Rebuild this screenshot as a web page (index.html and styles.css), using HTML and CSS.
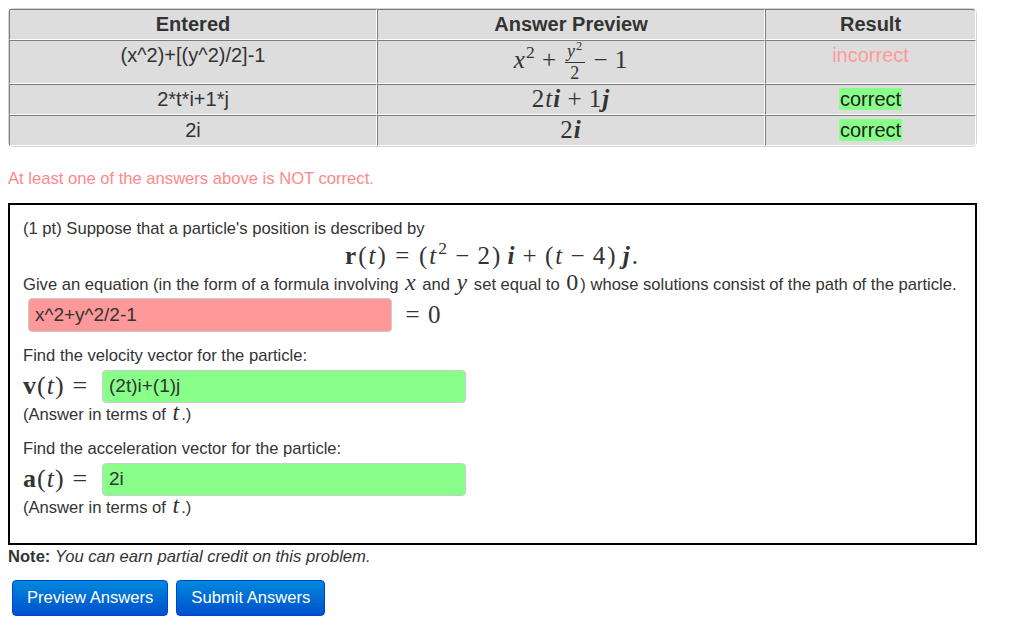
FILE: index.html
```html
<!DOCTYPE html>
<html lang="en">
<head>
    <meta charset="UTF-8">
    <title>Problem 3</title>
    <link rel="stylesheet" href="styles.css">
</head>
<body>
    <table class="attempt-results">
        <tr>
            <th class="col-entered">Entered</th>
            <th class="col-preview">Answer Preview</th>
            <th class="col-result">Result</th>
        </tr>
        <tr class="tall">
            <td>(x^2)+[(y^2)/2]-1</td>
            <td class="preview">
                <span class="math"><span class="mi">x</span><sup>2</sup><span class="op">+</span><span class="frac"><span class="num"><span class="mi">y</span><sup>2</sup></span><span class="den">2</span></span><span class="op">−</span>1</span>
            </td>
            <td><span class="incorrect">incorrect</span></td>
        </tr>
        <tr>
            <td>2*t*i+1*j</td>
            <td class="preview">
                <span class="math">2<span class="mi">t</span><span class="mbi">i</span><span class="op">+</span>1<span class="mbi">j</span></span>
            </td>
            <td><span class="correct">correct</span></td>
        </tr>
        <tr>
            <td>2i</td>
            <td class="preview">
                <span class="math">2<span class="mbi">i</span></span>
            </td>
            <td><span class="correct">correct</span></td>
        </tr>
    </table>

    <p class="message">At least one of the answers above is NOT correct.</p>

    <div class="problem">
        <p class="line">(1 pt) Suppose that a particle's position is described by</p>
        <div class="display math">
            <span class="mb">r</span>(<span class="mi">t</span>)<span class="rel">=</span>(<span class="mi">t</span><sup>2</sup><span class="op">−</span>2)<span class="sp"></span><span class="mbi">i</span><span class="op">+</span>(<span class="mi">t</span><span class="op">−</span>4)<span class="sp"></span><span class="mbi">j</span>.
        </div>
        <p class="line">Give an equation (in the form of a formula involving <span class="imath mi">x</span> and <span class="imath mi">y</span> set equal to <span class="imath">0</span>) whose solutions consist of the path of the particle.</p>
        <div class="answer-row first">
            <input class="answer wrong" type="text" value="x^2+y^2/2-1">
            <span class="math eq"><span class="rel">=</span>0</span>
        </div>

        <p class="line gap">Find the velocity vector for the particle:</p>
        <div class="answer-row">
            <span class="math label"><span class="mb">v</span>(<span class="mi">t</span>)<span class="rel">=</span></span>
            <input class="answer right" type="text" value="(2t)i+(1)j">
        </div>
        <p class="line">(Answer in terms of <span class="imath mi">t</span>.)</p>

        <p class="line gap wide">Find the acceleration vector for the particle:</p>
        <div class="answer-row">
            <span class="math label"><span class="mb">a</span>(<span class="mi">t</span>)<span class="rel">=</span></span>
            <input class="answer right" type="text" value="2i">
        </div>
        <p class="line">(Answer in terms of <span class="imath mi">t</span>.)</p>
    </div>

    <p class="note"><b>Note:</b> <i>You can earn partial credit on this problem.</i></p>

    <div class="buttons">
        <button class="btn">Preview Answers</button>
        <button class="btn">Submit Answers</button>
    </div>
</body>
</html>
```

FILE: styles.css
```css
body {
    margin: 8px;
    font-family: 'Liberation Sans', Arial, sans-serif;
    font-size: 16.6px;
    color: #333;
    background: #fff;
}

/* results table */
.attempt-results {
    border-collapse: separate;
    border-spacing: 0;
    width: 969px;
    border: 1px solid #d4d4d4;
    border-radius: 5px;
    background: #ddd;
    font-size: 20px;
    color: #333;
}

.attempt-results th,
.attempt-results td {
    border: 1px solid;
    border-color: #7d7d7d #fff #fff #7d7d7d;
    padding: 2px 4px 3px;
    line-height: 24px;
    text-align: center;
    vertical-align: top;
}

.attempt-results tr:first-child th:last-child {
    border-top-right-radius: 4px;
}

.attempt-results tr:last-child td:last-child {
    border-bottom-right-radius: 4px;
}

.col-entered { width: 358px; }
.col-preview { width: 378px; }

.attempt-results td.preview {
    vertical-align: middle;
    padding: 0 4px;
}

.tall td {
    height: 37px;
}

.incorrect {
    color: #f99;
}

.correct {
    background: #8f8;
    color: #222;
    padding: 0 1px;
}

/* math */
.math {
    font-family: 'Liberation Serif', 'Times New Roman', serif;
    font-size: 25px;
    letter-spacing: 0.04em;
    color: #333;
    white-space: nowrap;
}

.mi { font-style: italic; }
.mb { font-weight: bold; }
.mbi { font-weight: bold; font-style: italic; }

.math sup {
    font-size: 0.7em;
    line-height: 0;
    vertical-align: 0.55em;
}

.op { margin: 0 0.25em; }
.rel { margin: 0 0.3em; }
.sp { display: inline-block; width: 0.2em; }

.frac {
    display: inline-flex;
    flex-direction: column;
    align-items: center;
    vertical-align: middle;
    font-size: 0.72em;
    line-height: 1.05;
    margin: 0 0.1em;
}

.frac .num {
    border-bottom: 1px solid #333;
    padding: 0 2px 1px;
}

.frac .den {
    padding-top: 1px;
}

/* message */
.message {
    margin: 22px 0 14px;
    line-height: 20px;
    color: #f88;
}

/* problem box */
.problem {
    width: 939px;
    border: 2px solid #000;
    padding: 14px 13px 25px;
    display: flex;
    flex-direction: column;
}

.line {
    margin: 0;
    line-height: 20px;
}

.line.gap {
    margin-top: 12px;
}

.line.gap.wide {
    margin-top: 14px;
}

.imath {
    font-family: 'Liberation Serif', 'Times New Roman', serif;
    font-size: 24px;
    line-height: 0;
    margin: 0 2px;
}

.display {
    text-align: center;
    line-height: 26px;
    letter-spacing: 0.08em;
    margin: 4px 0 6px;
}

.answer-row {
    display: flex;
    align-items: center;
    height: 34px;
    margin: 3px 0 2px;
}

.answer-row.first {
    padding-left: 5px;
}

.answer-row .label {
    font-size: 26px;
    line-height: 30px;
    width: 79px;
}

.answer-row .label .rel {
    margin-right: 0;
}

.answer-row .eq {
    margin-left: 6px;
}

.answer {
    font-family: 'Liberation Sans', Arial, sans-serif;
    font-size: 19px;
    color: #333;
    height: 34px;
    box-sizing: border-box;
    width: 364px;
    padding: 2px 6px;
    border: 1px solid #ccc;
    border-radius: 4px;
    outline: none;
}

.answer.wrong { background: #f99; }
.answer.right { background: #8f8; height: 33px; }

/* footer */
.note {
    margin: 2px 0 13px;
    line-height: 20px;
}

.buttons {
    display: flex;
    gap: 8px;
    padding-left: 4px;
}

.btn {
    font-family: 'Liberation Sans', Arial, sans-serif;
    font-size: 16.6px;
    color: #fff;
    height: 36px;
    padding: 0 14px;
    border: 1px solid #04c;
    border-radius: 4px;
    background: linear-gradient(#0088dd, #0050cc);
    cursor: pointer;
}
```
